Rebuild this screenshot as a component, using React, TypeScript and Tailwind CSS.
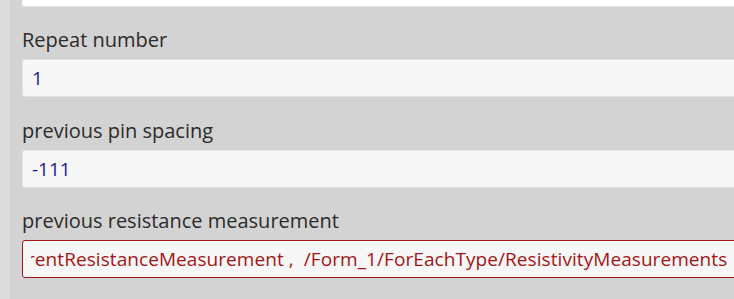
export default function App() {
  const fields = [
    { label: 'Repeat number', value: '1', pad: 'pt-[21px]' },
    { label: 'previous pin spacing', value: '-111', pad: 'pt-[22px]' },
  ];

  return (
    <div className="w-[734px] h-[299px] overflow-hidden bg-[#dcdcdc] font-['Open_Sans',sans-serif]">
      <div className="flex w-[780px] h-full">
        <div className="w-[10px] shrink-0 bg-[#dcdcdc]" />
        <div className="flex-1 bg-[#d3d3d3] pl-[12px] pr-[12px]">
          <div className="h-[7px] bg-white rounded-b-[3px] border-b border-[#e3e3e3]" />
          {fields.map((f) => (
            <div key={f.label} className={f.pad}>
              <div className="text-[20px] leading-[24px] mb-[7px] text-[#2b2b2b]">{f.label}</div>
              <div className="h-[38px] bg-[#f7f7f7] rounded-[3px] border border-[#e2e2e2] px-[9px] flex items-center text-[19px] text-[#1c1c8a]">
                {f.value}
              </div>
            </div>
          ))}
          <div className="pt-[21px]">
            <div className="text-[20px] leading-[24px] mb-[7px] text-[#2b2b2b]">previous resistance measurement</div>
            <div className="h-[38px] bg-[#f7f7f7] rounded-[3px] border border-[#a31515] flex items-center px-[8px]">
              <div className="flex-1 overflow-hidden whitespace-pre text-[19px] tracking-[0.07px] text-[#a31515]">
                <span className="relative">
                  <span className="absolute right-0">/Form_1/ForEachType/previousCur</span>
                </span>
                <span className="-ml-[4px]">{'rentResistanceMeasurement ,  /Form_1/ForEachType/ResistivityMeasurements'}</span>
              </div>
            </div>
          </div>
        </div>
      </div>
    </div>
  );
}
